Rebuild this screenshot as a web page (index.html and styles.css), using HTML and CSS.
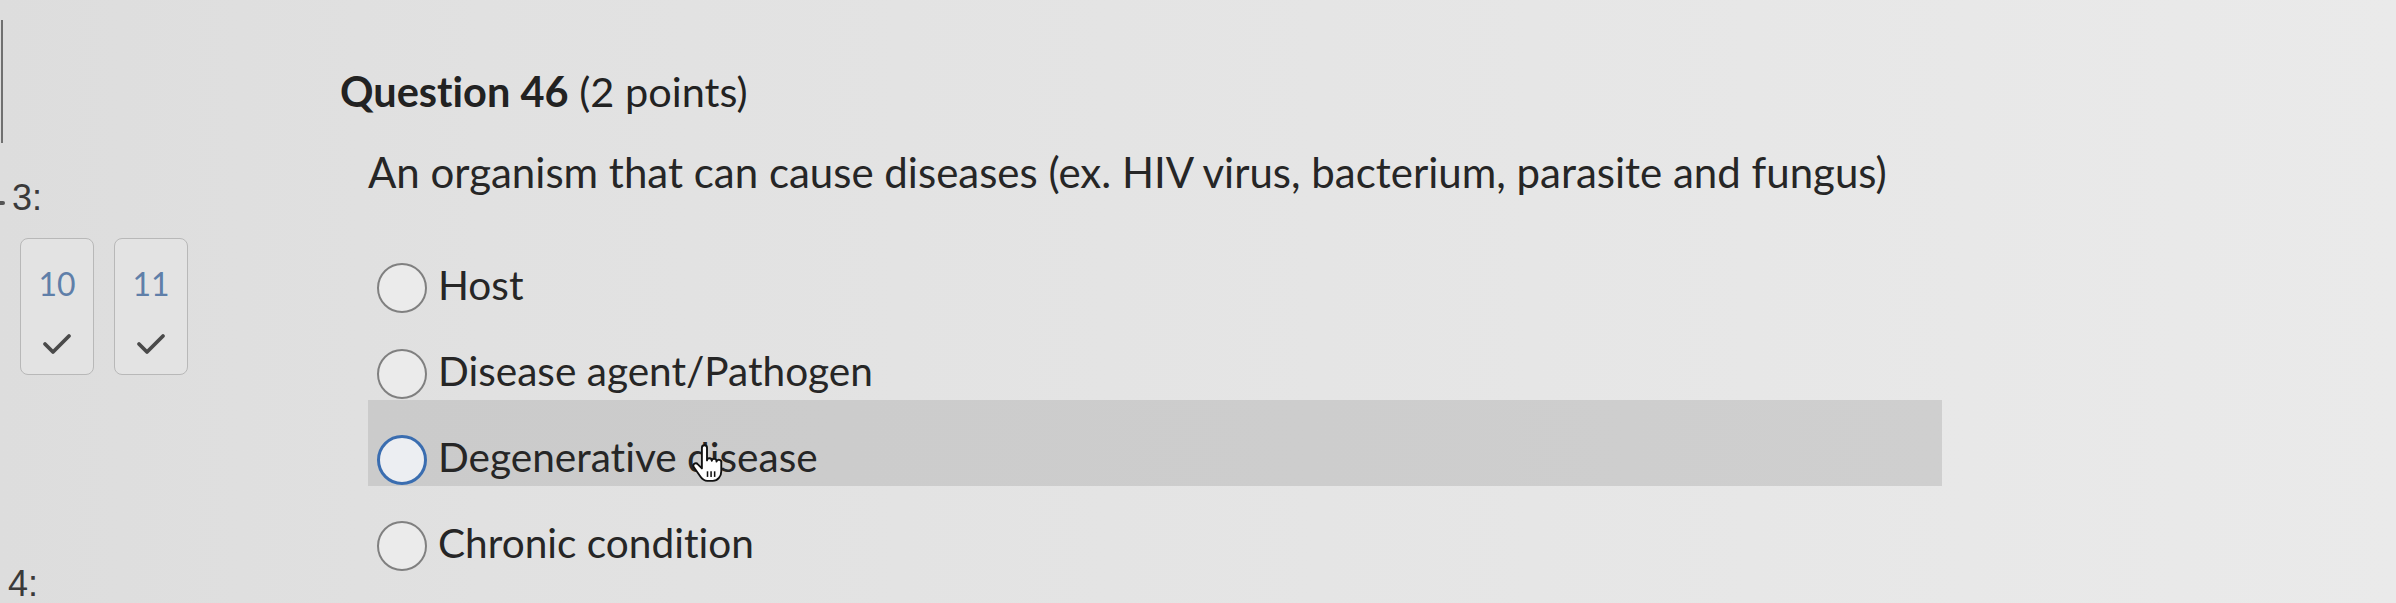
FILE: index.html
```html
<!DOCTYPE html>
<html lang="en">
<head>
<meta charset="utf-8">
<title>Question 46</title>
<link rel="stylesheet" href="styles.css">
</head>
<body>
<div class="page">
  <aside class="sidebar">
    <div class="edge"></div>
    <div class="pg-label"><span class="tail"></span>3:</div>
    <div class="qnav">
      <div class="qbox"><span class="qnum">10</span>
        <svg class="qcheck" viewBox="0 0 30 22" width="30" height="22"><polyline points="3,11 11,19 27,3" fill="none" stroke="#4a4a4a" stroke-width="3.8" stroke-linecap="round" stroke-linejoin="round"/></svg>
      </div>
      <div class="qbox"><span class="qnum">11</span>
        <svg class="qcheck" viewBox="0 0 30 22" width="30" height="22"><polyline points="3,11 11,19 27,3" fill="none" stroke="#4a4a4a" stroke-width="3.8" stroke-linecap="round" stroke-linejoin="round"/></svg>
      </div>
    </div>
    <div class="pg-label pg-label-4">4:</div>
  </aside>
  <main class="main">
    <h2 class="qtitle"><b>Question 46</b> (2 points)</h2>
    <p class="prompt">An organism that can cause diseases (ex. HIV virus, bacterium, parasite and fungus)</p>
    <div class="options">
      <label class="opt"><span class="radio"></span><span class="opt-text">Host</span></label>
      <label class="opt"><span class="radio"></span><span class="opt-text">Disease agent/Pathogen</span></label>
      <label class="opt opt-hover"><span class="radio radio-focus"></span><span class="opt-text">Degenerative disease</span></label>
      <label class="opt"><span class="radio"></span><span class="opt-text">Chronic condition</span></label>
    </div>
  </main>
</div>
<svg class="cursor" viewBox="0 0 20 24" width="34" height="41">
  <path d="M7 2.2 a1.5 1.5 0 0 1 3 0 V9.6 a1.4 1.4 0 0 1 2.8 0.2 a1.4 1.4 0 0 1 2.8 0.5 a1.4 1.4 0 0 1 2.8 0.7 V16 c0 3 -2 5.6 -5 5.6 H10.2 c-2 0 -3 -1 -4 -2.4 L2.3 13.6 a1.4 1.4 0 0 1 2.2 -1.8 L7 14.3 Z" fill="#fff" stroke="#111" stroke-width="1.1" stroke-linejoin="round"/>
  <line x1="10.3" y1="16" x2="10.3" y2="19.3" stroke="#111" stroke-width="0.9"/>
  <line x1="12.4" y1="16" x2="12.4" y2="19.3" stroke="#111" stroke-width="0.9"/>
  <line x1="14.5" y1="16" x2="14.5" y2="19.3" stroke="#111" stroke-width="0.9"/>
</svg>
</body>
</html>
```
FILE: styles.css
```css
html, body {
  margin: 0;
  padding: 0;
}
body {
  width: 2396px;
  height: 603px;
  overflow: hidden;
  position: relative;
  background: linear-gradient(90deg, #dddddd 0%, #e1e1e1 20%, #e5e5e5 55%, #eaeaea 100%);
  font-family: Lato, "Open Sans", sans-serif;
  font-variant-ligatures: none;
  font-feature-settings: "liga" 0, "dlig" 0;
  color: #262626;
}
.page {
  display: flex;
  align-items: flex-start;
}
.sidebar {
  flex: none;
  width: 340px;
  display: flex;
  flex-direction: column;
}
.edge {
  width: 2px;
  height: 123px;
  margin-top: 20px;
  margin-left: 1px;
  background: #707070;
}
.pg-label {
  position: relative;
  font-family: "Liberation Sans", Arial, sans-serif;
  font-size: 36px;
  line-height: 38px;
  color: #3a3a3a;
  margin-top: 36px;
  margin-left: 12px;
  white-space: nowrap;
}
.tail {
  position: absolute;
  left: -12px;
  top: 22px;
  width: 5px;
  height: 4px;
  border-radius: 0 2px 2px 0;
  background: #555;
}
.pg-label-4 {
  margin-top: 190px;
  margin-left: 8px;
}
.qnav {
  display: flex;
  gap: 20px;
  margin-top: 21px;
  margin-left: 20px;
}
.qbox {
  box-sizing: border-box;
  width: 74px;
  height: 137px;
  border: 1.5px solid #b8b8b8;
  border-radius: 8px;
  background: #e3e3e3;
  display: flex;
  flex-direction: column;
  align-items: center;
  padding-top: 27px;
}
.qnum {
  font-family: Lato, sans-serif;
  font-size: 32px;
  line-height: 36px;
  color: #5f7fa9;
}
.qcheck {
  display: block;
  margin-top: 31px;
}
.main {
  flex: 1;
  padding-top: 66px;
}
.qtitle {
  margin: 0;
  font-size: 41.5px;
  line-height: 50px;
  font-weight: 400;
  color: #222;
}
.qtitle b {
  font-weight: 700;
}
.prompt {
  margin: 31px 0 0 28px;
  font-size: 42px;
  line-height: 50px;
  color: #262626;
}
.options {
  margin-top: 31px;
  margin-left: 28px;
  width: 1574px;
  display: flex;
  flex-direction: column;
}
.opt {
  box-sizing: border-box;
  height: 86px;
  display: flex;
  align-items: center;
  gap: 11px;
  padding-left: 9px;
  padding-top: 34px;
}
.opt-hover {
  background: linear-gradient(90deg, #cbcbcb 0%, #cdcdcd 60%, #cfcfcf 100%);
}
.radio {
  box-sizing: border-box;
  flex: none;
  width: 50px;
  height: 50px;
  border-radius: 50%;
  border: 2px solid #808080;
  background: #ebebeb;
}
.radio-focus {
  border: 3px solid #3a6db0;
  background: #eceef2;
}
.opt-text {
  font-size: 40.6px;
  line-height: 49px;
  margin-bottom: 8px;
  color: #262626;
}
.cursor {
  position: absolute;
  left: 690px;
  top: 444px;
}
```
